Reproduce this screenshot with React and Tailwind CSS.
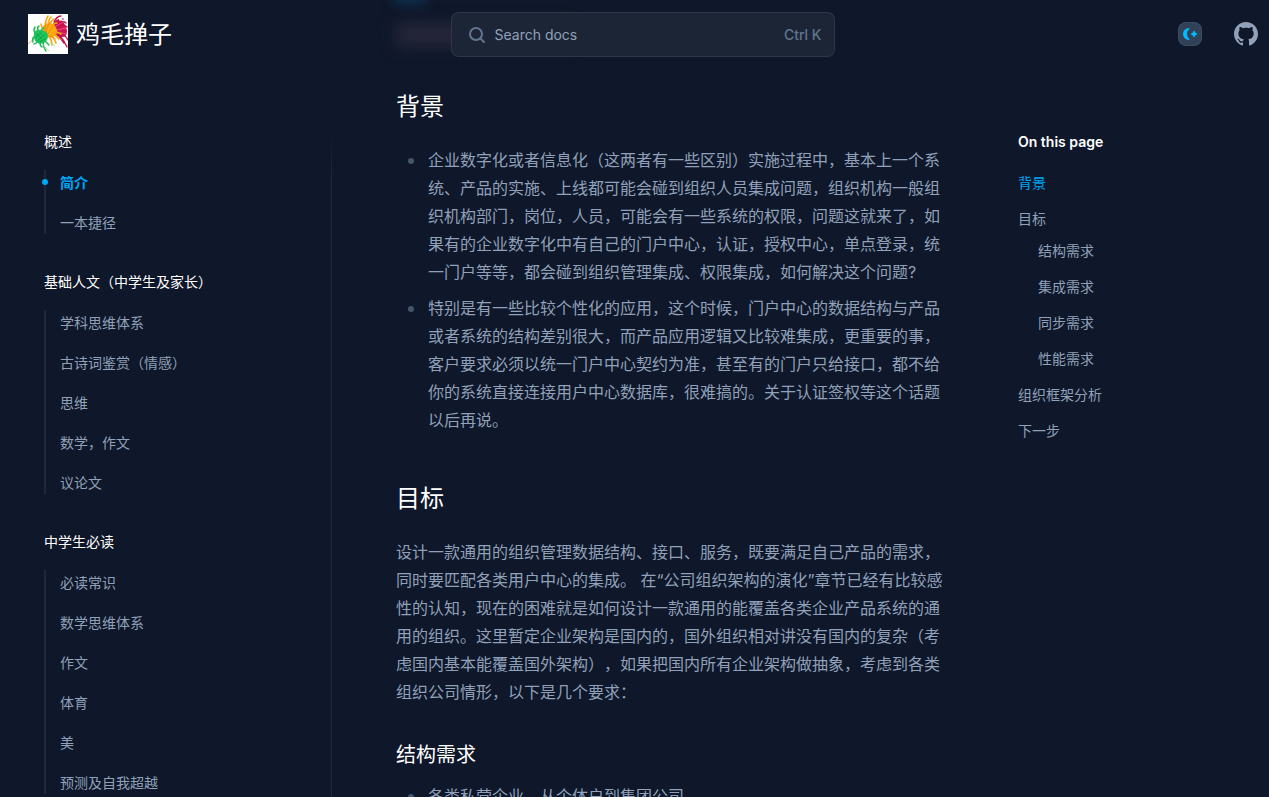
import React from "react";

const sections = [
  { title: "概述", items: ["简介", "一本捷径"] },
  { title: "基础人文（中学生及家长）", items: ["学科思维体系", "古诗词鉴赏（情感）", "思维", "数学，作文", "议论文"] },
  { title: "中学生必读", items: ["必读常识", "数学思维体系", "作文", "体育", "美", "预测及自我超越"] },
];

const toc = [
  { label: "背景" },
  { label: "目标", children: ["结构需求", "集成需求", "同步需求", "性能需求"] },
  { label: "组织框架分析" },
  { label: "下一步" },
];

function Duster() {
  return (
    <svg viewBox="0 0 40 40" className="size-10 shrink-0" fill="none" strokeLinecap="round" aria-hidden="true">
      <rect width="40" height="40" fill="#fff" />
      <path d="M0.5 29.5 6 25" stroke="#d9b36a" />
      <path d="M25 10Q28 4 33 6Q38 10 39 17Q39 23 34 23Q28 23 26 18Z" fill="#cf1554" />
      <path d="M26 8Q29 2 33 2M28 9Q31 4 35 5M30 10Q35 6 38 9M31 12Q36 10 39 13M32 22Q36 26 39 33M30 21Q33 25 36 29M34 20Q38 22 40 26" stroke="#c30d4b" strokeWidth="1.3" />
      <path d="M27 13 35 8M29 16 38 14M29 18 38 20M28 21 34 26" stroke="#ec5f8f" strokeWidth="0.8" />
      <path d="M31 4.500Q34 2.500 34.500 5Q33 7.500 31 6.500Z" fill="#fff" />
      <path d="M14 14Q17 9 22 9Q27 10 29 16Q30 21 25 23Q20 25 16 21Z" fill="#fdae12" />
      <path d="M17 14Q17 7 20 2M20 13Q20 6 23 3M22 13Q22 7 26 5M24 14Q25 9 29 9M15 15Q13 12 13 10M25 18Q30 18 33 20M24 20Q29 22 31 25M22 21Q27 25 28 29M20 21Q24 26 24 31" stroke="#fba60c" strokeWidth="1.6" />
      <path d="M18 19Q19 12 22 8M20 20Q22 15 26 12M21 22Q25 22 28 25M17 17Q17 12 18 9" stroke="#f47f0a" strokeWidth="0.8" />
      <path d="M6 19Q8 15 12 16Q18 16 20 21Q20 27 16 29Q11 31 8 28Q5 25 6 19Z" fill="#1fc45c" />
      <path d="M7 19Q5 16 7 13M10 17Q9 13 11 12M13 17Q14 14 16 14M6 23Q4 24 5 28M9 28Q8 30 6 30M12 28Q12 32 14 33M15 28Q15 33 18 37M17 27Q19 29 21 31" stroke="#20bd5a" strokeWidth="1.5" />
      <path d="M7 24 13 19M9 27 16 21M12 28 17 25M9 20 13 24" stroke="#0b9a44" strokeWidth="0.9" />
      <path d="M15 31Q18 34 21 37M22 29Q25 31 27 32" stroke="#a9cf70" strokeWidth="0.7" />
    </svg>
  );
}

function Header() {
  return (
    <header className="relative flex h-[68px] shrink-0 items-center justify-between pr-[11px] pl-7">
      <div aria-hidden="true" className="absolute top-6 left-[396px] h-[22px] w-[172px] bg-[#27273b] blur-[8px]" />
      <div aria-hidden="true" className="absolute -top-2 left-[394px] h-3 w-8 bg-[#0c3352] blur-[6px]" />
      <a href="#top" className="flex items-center gap-2 text-2xl text-white">
        <Duster />
        <span className="pt-[2px]">鸡毛掸子</span>
      </a>
      <button
        type="button"
        className="absolute top-3 left-1/2 flex h-[45px] w-96 -translate-x-[184px] items-center rounded-lg border border-slate-300/10 bg-[#1c2637]/95 pr-3 pl-[15px] text-sm text-slate-400"
      >
        <svg viewBox="0 0 20 20" className="size-5 fill-slate-500" aria-hidden="true">
          <path d="M16.293 17.707a1 1 0 0 0 1.414-1.414l-1.414 1.414ZM9 14a5 5 0 0 1-5-5H2a7 7 0 0 0 7 7v-2ZM4 9a5 5 0 0 1 5-5V2a7 7 0 0 0-7 7h2Zm5-5a5 5 0 0 1 5 5h2a7 7 0 0 0-7-7v2Zm8.707 12.293-3.757-3.757-1.414 1.414 3.757 3.757 1.414-1.414ZM14 9a4.98 4.98 0 0 1-1.464 3.536l1.414 1.414A6.98 6.98 0 0 0 16 9h-2Zm-1.464 3.536A4.98 4.98 0 0 1 9 14v2a6.98 6.98 0 0 0 4.95-2.05l-1.414-1.414Z" />
        </svg>
        <span className="ml-2">Search docs</span>
        <kbd className="ml-auto font-['Inter',sans-serif] font-medium text-slate-500">Ctrl K</kbd>
      </button>
      <div className="flex items-center gap-8">
        <button type="button" aria-label="Theme" className="flex size-6 items-center justify-center rounded-lg bg-slate-700 ring-1 ring-white/5 ring-inset">
          <svg viewBox="0 0 16 16" className="size-4 fill-sky-400" aria-hidden="true">
            <path fillRule="evenodd" clipRule="evenodd" d="M7.23 3.333C7.757 2.905 7.68 2 7 2a6 6 0 1 0 0 12c.68 0 .758-.905.23-1.332A5.989 5.989 0 0 1 5 8c0-1.885.87-3.568 2.23-4.668ZM12 5a1 1 0 0 1 1 1 1 1 0 0 0 1 1 1 1 0 1 1 0 2 1 1 0 0 0-1 1 1 1 0 1 1-2 0 1 1 0 0 0-1-1 1 1 0 1 1 0-2 1 1 0 0 0 1-1 1 1 0 0 1 1-1Z" />
          </svg>
        </button>
        <a href="#github" aria-label="GitHub">
          <svg viewBox="0 0 16 16" className="size-6 fill-slate-400" aria-hidden="true">
            <path d="M8 0C3.58 0 0 3.58 0 8C0 11.54 2.29 14.53 5.47 15.59C5.87 15.66 6.02 15.42 6.02 15.21C6.02 15.02 6.01 14.39 6.01 13.72C4 14.09 3.48 13.23 3.32 12.78C3.23 12.55 2.84 11.84 2.5 11.65C2.22 11.5 1.82 11.13 2.49 11.12C3.12 11.11 3.57 11.7 3.72 11.94C4.44 13.15 5.59 12.81 6.05 12.6C6.12 12.08 6.33 11.73 6.56 11.53C4.78 11.33 2.92 10.64 2.92 7.58C2.92 6.71 3.23 5.99 3.74 5.43C3.66 5.23 3.38 4.41 3.82 3.31C3.82 3.31 4.49 3.1 6.02 4.13C6.66 3.95 7.34 3.86 8.02 3.86C8.7 3.86 9.38 3.95 10.02 4.13C11.55 3.09 12.22 3.31 12.22 3.31C12.66 4.41 12.38 5.23 12.3 5.43C12.81 5.99 13.12 6.7 13.12 7.58C13.12 10.65 11.25 11.33 9.47 11.53C9.76 11.78 10.01 12.26 10.01 13.01C10.01 14.08 10 14.94 10 15.21C10 15.42 10.15 15.67 10.55 15.59C13.71 14.53 16 11.53 16 8C16 3.58 12.42 0 8 0Z" />
          </svg>
        </a>
      </div>
    </header>
  );
}

function Sidebar() {
  return (
    <div className="flex w-[332px] shrink-0 justify-between overflow-hidden">
      <nav aria-label="Docs" className="flex flex-col gap-[38px] pt-16 pl-11 text-sm">
        {sections.map((section, s) => (
          <section key={section.title}>
            <h2 className="text-white">{section.title}</h2>
            <ul className="mt-[18px] flex flex-col gap-5 border-l-2 border-slate-800 pt-[3px] pb-[1px]">
              {section.items.map((item, i) => {
                const active = s === 0 && i === 0;
                return (
                  <li key={item} className="relative pl-[14px]">
                    {active && <span className="absolute top-[6px] -left-1 size-[6px] rounded-full bg-sky-500" />}
                    <a href="#doc" className={active ? "font-semibold text-sky-500" : "text-slate-400"}>
                      {item}
                    </a>
                  </li>
                );
              })}
            </ul>
          </section>
        ))}
      </nav>
      <div className="mt-16 w-px bg-linear-to-b from-transparent to-slate-800 to-[48px]" />
    </div>
  );
}

function Bullet({ children }) {
  return (
    <li className="flex gap-[14px] pl-3">
      <span aria-hidden="true" className="mt-[12px] size-[6px] shrink-0 rounded-full bg-slate-600" />
      <span>{children}</span>
    </li>
  );
}

function Article() {
  return (
    <article className="w-[550px] shrink-0 pt-[21px] leading-7 text-slate-400">
      <h2 className="text-2xl leading-9 text-white">背景</h2>
      <ul className="mt-[21px] flex flex-col gap-2">
        <Bullet>
          企业数字化或者信息化（这两者有一些区别）实施过程中，基本上一个系统、产品的实施、上线都可能会碰到组织人员集成问题，组织机构一般组织机构部门，岗位，人员，可能会有一些系统的权限，问题这就来了，如果有的企业数字化中有自己的门户中心，认证，授权中心，单点登录，统一门户等等，都会碰到组织管理集成、权限集成，如何解决这个问题?
        </Bullet>
        <Bullet>
          特别是有一些比较个性化的应用，这个时候，门户中心的数据结构与产品或者系统的结构差别很大，而产品应用逻辑又比较难集成，更重要的事，客户要求必须以统一门户中心契约为准，甚至有的门户只给接口，都不给你的系统直接连接用户中心数据库，很难搞的。关于认证签权等这个话题以后再说。
        </Bullet>
      </ul>
      <h2 className="mt-[47px] text-2xl leading-9 text-white">目标</h2>
      <p className="mt-[21px]">
        设计一款通用的组织管理数据结构、接口、服务，既要满足自己产品的需求，同时要匹配各类用户中心的集成。 在“公司组织架构的演化”章节已经有比较感性的认知，现在的困难就是如何设计一款通用的能覆盖各类企业产品系统的通用的组织。这里暂定企业架构是国内的，国外组织相对讲没有国内的复杂（考虑国内基本能覆盖国外架构），如果把国内所有企业架构做抽象，考虑到各类组织公司情形，以下是几个要求：
      </p>
      <h3 className="mt-[33px] text-xl leading-8 text-white">结构需求</h3>
      <ul className="mt-[11px]">
        <Bullet>各类私营企业，从个体户到集团公司</Bullet>
      </ul>
    </article>
  );
}

function Toc() {
  return (
    <nav aria-label="On this page" className="ml-[72px] flex-1 pt-16 text-sm">
      <h2 className="font-semibold text-white">On this page</h2>
      <ol className="mt-[21px] flex flex-col gap-4">
        {toc.map((entry, i) => (
          <li key={entry.label}>
            <a href="#section" className={i === 0 ? "text-sky-500" : "text-slate-400"}>
              {entry.label}
            </a>
            {entry.children && (
              <ol className="mt-3 flex flex-col gap-4 pl-5 text-slate-400">
                {entry.children.map((child) => (
                  <li key={child}>
                    <a href="#section">{child}</a>
                  </li>
                ))}
              </ol>
            )}
          </li>
        ))}
      </ol>
    </nav>
  );
}

export default function App() {
  return (
    <div
      className="flex h-screen flex-col overflow-hidden bg-[#0f172a] font-['Inter','Noto_Sans_CJK_SC',sans-serif] antialiased [text-spacing-trim:space-all]"
      lang="zh-CN"
    >
      <Header />
      <div className="flex min-h-0 flex-1 overflow-hidden">
        <Sidebar />
        <main className="flex min-w-0 flex-1 pl-16">
          <Article />
          <Toc />
        </main>
      </div>
    </div>
  );
}
